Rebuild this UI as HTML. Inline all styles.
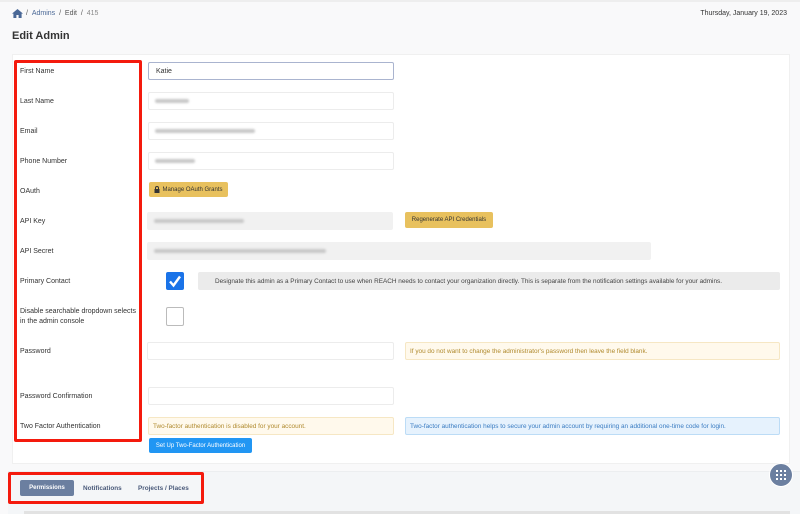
<!DOCTYPE html>
<html><head><style>
*{margin:0;padding:0;box-sizing:border-box}
body{width:800px;height:514px;overflow:hidden;background:#f9f9fa;font-family:"Liberation Sans",sans-serif;color:#333;position:relative;font-size:7px}
.a{position:absolute}
.lbl{position:absolute;left:20px;font-size:7px;color:#333}
.in{position:absolute;border:1px solid #ececec;background:#fff;border-radius:2px}
.g{background:#f1f1f1;border-color:#f1f1f1}
.blur{position:absolute;top:6px;left:6px;height:4px;background:#c8c8c8;filter:blur(1px);border-radius:2px}
.btn{position:absolute;font-size:6px;border-radius:2px;display:flex;align-items:center;justify-content:center}
</style></head><body>
<div class="a" style="left:0;top:0;width:800px;height:2px;background:#eee"></div>
<svg class="a" style="left:12px;top:9px" width="11" height="9" viewBox="0 0 11 9"><path d="M5.5 0L0 4.6h1.4V9h3V6h2.2v3h3V4.6H11z" fill="#4a6896"/></svg>
<div class="a" style="left:26px;top:10px;font-size:7px;color:#555">/ &nbsp;<span style="color:#4a6896">Admins</span> &nbsp;/ &nbsp;Edit &nbsp;/ &nbsp;<span style="color:#888">415</span></div>
<div class="a" style="right:13px;top:10px;font-size:7px;color:#333">Thursday, January 19, 2023</div>
<div class="a" style="left:12px;top:30px;font-size:11px;font-weight:bold;color:#333">Edit Admin</div>
<div class="a" style="left:12px;top:54px;width:778px;height:410px;background:#fff;border:1px solid #f0f0f0"></div>
<div class="a" style="left:14px;top:60px;width:128px;height:382px;border:3px solid #f41a0d;border-radius:2px"></div>
<div class="lbl" style="top:68px">First Name</div>
<div class="lbl" style="top:98px">Last Name</div>
<div class="lbl" style="top:128px">Email</div>
<div class="lbl" style="top:158px">Phone Number</div>
<div class="lbl" style="top:188px">OAuth</div>
<div class="lbl" style="top:218px">API Key</div>
<div class="lbl" style="top:248px">API Secret</div>
<div class="lbl" style="top:278px">Primary Contact</div>
<div class="lbl" style="top:307px;width:120px;line-height:10px">Disable searchable dropdown selects in the admin console</div>
<div class="lbl" style="top:348px">Password</div>
<div class="lbl" style="top:393px">Password Confirmation</div>
<div class="lbl" style="top:423px">Two Factor Authentication</div>
<div class="in" style="left:148px;top:62px;width:246px;height:18px;border-color:#aab4cf"><span style="position:absolute;left:7px;top:5px;font-size:7px">Katie</span></div>
<div class="in" style="left:148px;top:92px;width:246px;height:18px"><div class="blur" style="width:34px"></div></div>
<div class="in" style="left:148px;top:122px;width:246px;height:18px"><div class="blur" style="width:100px"></div></div>
<div class="in" style="left:148px;top:152px;width:246px;height:18px"><div class="blur" style="width:40px"></div></div>
<div class="btn" style="left:149px;top:182px;width:79px;height:15px;background:#e8c15e;color:#333"><svg width="6" height="7" viewBox="0 0 6 7" style="margin-right:2px"><path d="M1.5 3V2a1.5 1.5 0 013 0v1" stroke="#333" fill="none"/><rect x="0.5" y="3" width="5" height="4" fill="#333"/></svg>Manage OAuth Grants</div>
<div class="in g" style="left:147px;top:212px;width:246px;height:18px"><div class="blur" style="width:90px"></div></div>
<div class="btn" style="left:405px;top:212px;width:88px;height:16px;background:#e8c15e;color:#333">Regenerate API Credentials</div>
<div class="in g" style="left:147px;top:242px;width:504px;height:18px"><div class="blur" style="width:172px"></div></div>
<div class="a" style="left:166px;top:272px;width:18px;height:18px;background:#1a73e8;border-radius:2px"><svg width="18" height="18"><path d="M4 9.5l3.5 4L14 4.5" stroke="#fff" stroke-width="2.4" fill="none"/></svg></div>
<div class="a" style="left:198px;top:272px;width:582px;height:18px;background:#ebebeb;border-radius:2px;font-size:6.4px;padding:5.5px 0 0 17px;color:#444">Designate this admin as a Primary Contact to use when REACH needs to contact your organization directly. This is separate from the notification settings available for your admins.</div>
<div class="a" style="left:166px;top:307px;width:18px;height:19px;border:1px solid #bbb;border-radius:2px;background:#fff"></div>
<div class="in" style="left:147px;top:342px;width:247px;height:18px"></div>
<div class="a" style="left:405px;top:342px;width:375px;height:18px;background:#fff9ec;border:1px solid #f6e7c4;border-radius:2px;font-size:6.4px;padding:5px 0 0 4px;color:#b08a2e">If you do not want to change the administrator's password then leave the field blank.</div>
<div class="in" style="left:148px;top:387px;width:246px;height:18px"></div>
<div class="a" style="left:148px;top:417px;width:246px;height:18px;background:#fff9ec;border:1px solid #f6e7c4;border-radius:2px;font-size:6.4px;padding:5px 0 0 4px;color:#b08a2e">Two-factor authentication is disabled for your account.</div>
<div class="a" style="left:405px;top:417px;width:375px;height:18px;background:#e6f2fd;border:1px solid #bcdcf6;border-radius:2px;font-size:6.4px;padding:5px 0 0 4px;color:#3a7cc2">Two-factor authentication helps to secure your admin account by requiring an additional one-time code for login.</div>
<div class="btn" style="left:149px;top:438px;width:103px;height:15px;background:#2196f3;color:#fff">Set Up Two-Factor Authentication</div>
<div class="a" style="left:8px;top:471px;width:792px;height:43px;background:#f4f6f8;border-top:1px solid #eceef0"></div>
<div class="a" style="left:8px;top:472px;width:196px;height:32px;border:3px solid #f41a0d;border-radius:2px"></div>
<div class="btn" style="left:20px;top:480px;width:54px;height:16px;background:#6b7fa0;color:#fff;font-weight:bold">Permissions</div>
<div class="a" style="left:83px;top:485px;font-size:6.4px;color:#4a5a7a;font-weight:bold">Notifications</div>
<div class="a" style="left:138px;top:485px;font-size:6.4px;color:#4a5a7a;font-weight:bold">Projects / Places</div>
<div class="a" style="left:24px;top:511px;width:766px;height:3px;background:#e2e2e2"></div>
<div class="a" style="left:769px;top:463px;width:24px;height:24px;border-radius:50%;background:#6b7fa0;border:1px solid #fff;display:grid;grid-template-columns:repeat(3,2px);gap:2px;justify-content:center;align-content:center">
<i style="width:2px;height:2px;background:#fff"></i><i style="width:2px;height:2px;background:#fff"></i><i style="width:2px;height:2px;background:#fff"></i><i style="width:2px;height:2px;background:#fff"></i><i style="width:2px;height:2px;background:#fff"></i><i style="width:2px;height:2px;background:#fff"></i><i style="width:2px;height:2px;background:#fff"></i><i style="width:2px;height:2px;background:#fff"></i><i style="width:2px;height:2px;background:#fff"></i></div>
</body></html>
